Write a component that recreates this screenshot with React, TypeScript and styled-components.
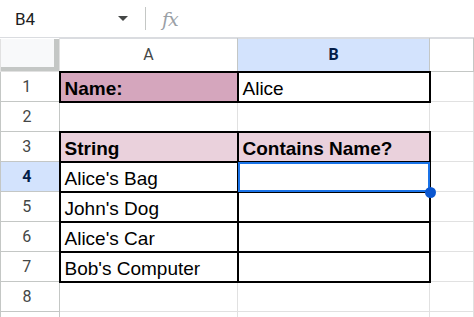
import React from "react";
import styled, { createGlobalStyle, css } from "styled-components";

const GlobalStyle = createGlobalStyle`
  html, body {
    margin: 0;
    padding: 0;
    background: #ffffff;
    overflow: hidden;
  }
  body {
    font-family: "Liberation Sans", Arial, sans-serif;
  }
`;

const Page = styled.div`
  width: 474px;
  height: 317px;
  overflow: hidden;
  background: #ffffff;
`;

const FormulaBar = styled.div`
  height: 37px;
  display: flex;
  align-items: center;
  border-bottom: 1px solid #dadce0;
`;

const NameBox = styled.div`
  width: 103px;
  padding-left: 15px;
  font-family: Roboto, "Liberation Sans", sans-serif;
  font-size: 17px;
  color: #1f1f1f;
`;

const Caret = styled.div`
  width: 0;
  height: 0;
  border-left: 5px solid transparent;
  border-right: 5px solid transparent;
  border-top: 5px solid #444746;
  margin-right: 17px;
`;

const Divider = styled.div`
  width: 1px;
  height: 23px;
  background: #c4c7c5;
  margin-right: 16px;
`;

const FxLabel = styled.span`
  font-family: "DejaVu Serif", "Liberation Serif", serif;
  font-style: italic;
  font-size: 19px;
  color: #9aa0a6;
  letter-spacing: -1px;
`;

const Sheet = styled.table`
  width: 474px;
  table-layout: fixed;
  border-collapse: collapse;
`;

const HeaderRow = styled.tr`
  height: 33px;
`;

const Row = styled.tr`
  height: 30px;
`;

const Corner = styled.th`
  background: #f8f9fa;
  border: 1px solid #e1e1e1;
  border-top: none;
  box-shadow: inset -5px -4px 0 #c4c7c5;
`;

const ColHeader = styled.th<{ $active?: boolean }>`
  font-family: Roboto, "Liberation Sans", sans-serif;
  font-weight: ${(p) => (p.$active ? 700 : 400)};
  font-size: 16px;
  color: ${(p) => (p.$active ? "#041e49" : "#444746")};
  background: ${(p) => (p.$active ? "#d3e3fd" : "#ffffff")};
  border: 1px solid #c4c7c5;
  border-top: 1px solid #dadce0;
  text-align: center;
  padding: 0;
`;

const RowHeader = styled.th<{ $active?: boolean }>`
  font-family: Roboto, "Liberation Sans", sans-serif;
  font-weight: ${(p) => (p.$active ? 700 : 400)};
  font-size: 16px;
  color: ${(p) => (p.$active ? "#041e49" : "#444746")};
  background: ${(p) => (p.$active ? "#d3e3fd" : "#ffffff")};
  border: 1px solid #c4c7c5;
  text-align: center;
  padding: 0 6px 0 0;
`;

const Cell = styled.td<{ $fill?: string; $bold?: boolean; $boxed?: boolean; $selected?: boolean }>`
  font-size: 19px;
  font-weight: ${(p) => (p.$bold ? 700 : 400)};
  color: #000000;
  background: ${(p) => p.$fill ?? "transparent"};
  border: ${(p) => (p.$boxed ? "2px solid #000000" : "1px solid #e1e1e1")};
  padding: 0 4px 1px;
  vertical-align: bottom;
  white-space: nowrap;
  overflow: visible;
  ${(p) =>
    p.$selected &&
    css`
      position: relative;
      &::after {
        content: "";
        position: absolute;
        inset: -1px;
        border: 2px solid #1a73e8;
        pointer-events: none;
      }
      &::before {
        content: "";
        position: absolute;
        right: -7px;
        bottom: -7px;
        width: 11px;
        height: 11px;
        border-radius: 50%;
        background: #0b57d0;
        z-index: 2;
      }
    `}
`;

const NAME_FILL = "#d5a6bd";
const HEAD_FILL = "#ead1dc";

type RowData = {
  n: number;
  label?: string;
  a?: string;
  b?: string;
  fill?: string;
  bold?: boolean;
  boxed?: boolean;
};

const rows: RowData[] = [
  { n: 1, a: "Name:", b: "Alice", boxed: true, bold: true, fill: NAME_FILL },
  { n: 2 },
  { n: 3, a: "String", b: "Contains Name?", boxed: true, bold: true, fill: HEAD_FILL },
  { n: 4, a: "Alice's Bag", b: "", boxed: true },
  { n: 5, a: "John's Dog", b: "", boxed: true },
  { n: 6, a: "Alice's Car", b: "", boxed: true },
  { n: 7, a: "Bob's Computer", b: "", boxed: true },
  { n: 8 },
  { n: 9, label: "" },
];

const App: React.FC = () => {
  return (
    <Page>
      <GlobalStyle />
      <FormulaBar>
        <NameBox>B4</NameBox>
        <Caret />
        <Divider />
        <FxLabel>fx</FxLabel>
      </FormulaBar>
      <Sheet>
        <colgroup>
          <col style={{ width: 59 }} />
          <col style={{ width: 178 }} />
          <col style={{ width: 192 }} />
          <col />
        </colgroup>
        <thead>
          <HeaderRow>
            <Corner />
            <ColHeader>A</ColHeader>
            <ColHeader $active>B</ColHeader>
            <ColHeader />
          </HeaderRow>
        </thead>
        <tbody>
          {rows.map((r) => (
            <Row key={r.n}>
              <RowHeader $active={r.n === 4}>{r.label ?? r.n}</RowHeader>
              <Cell $boxed={r.boxed} $bold={r.bold} $fill={r.fill}>
                {r.a}
              </Cell>
              <Cell
                $boxed={r.boxed}
                $bold={r.bold && r.n !== 1}
                $fill={r.n === 1 ? undefined : r.fill}
                $selected={r.n === 4}
              >
                {r.b}
              </Cell>
              <Cell />
            </Row>
          ))}
        </tbody>
      </Sheet>
    </Page>
  );
};

export default App;
